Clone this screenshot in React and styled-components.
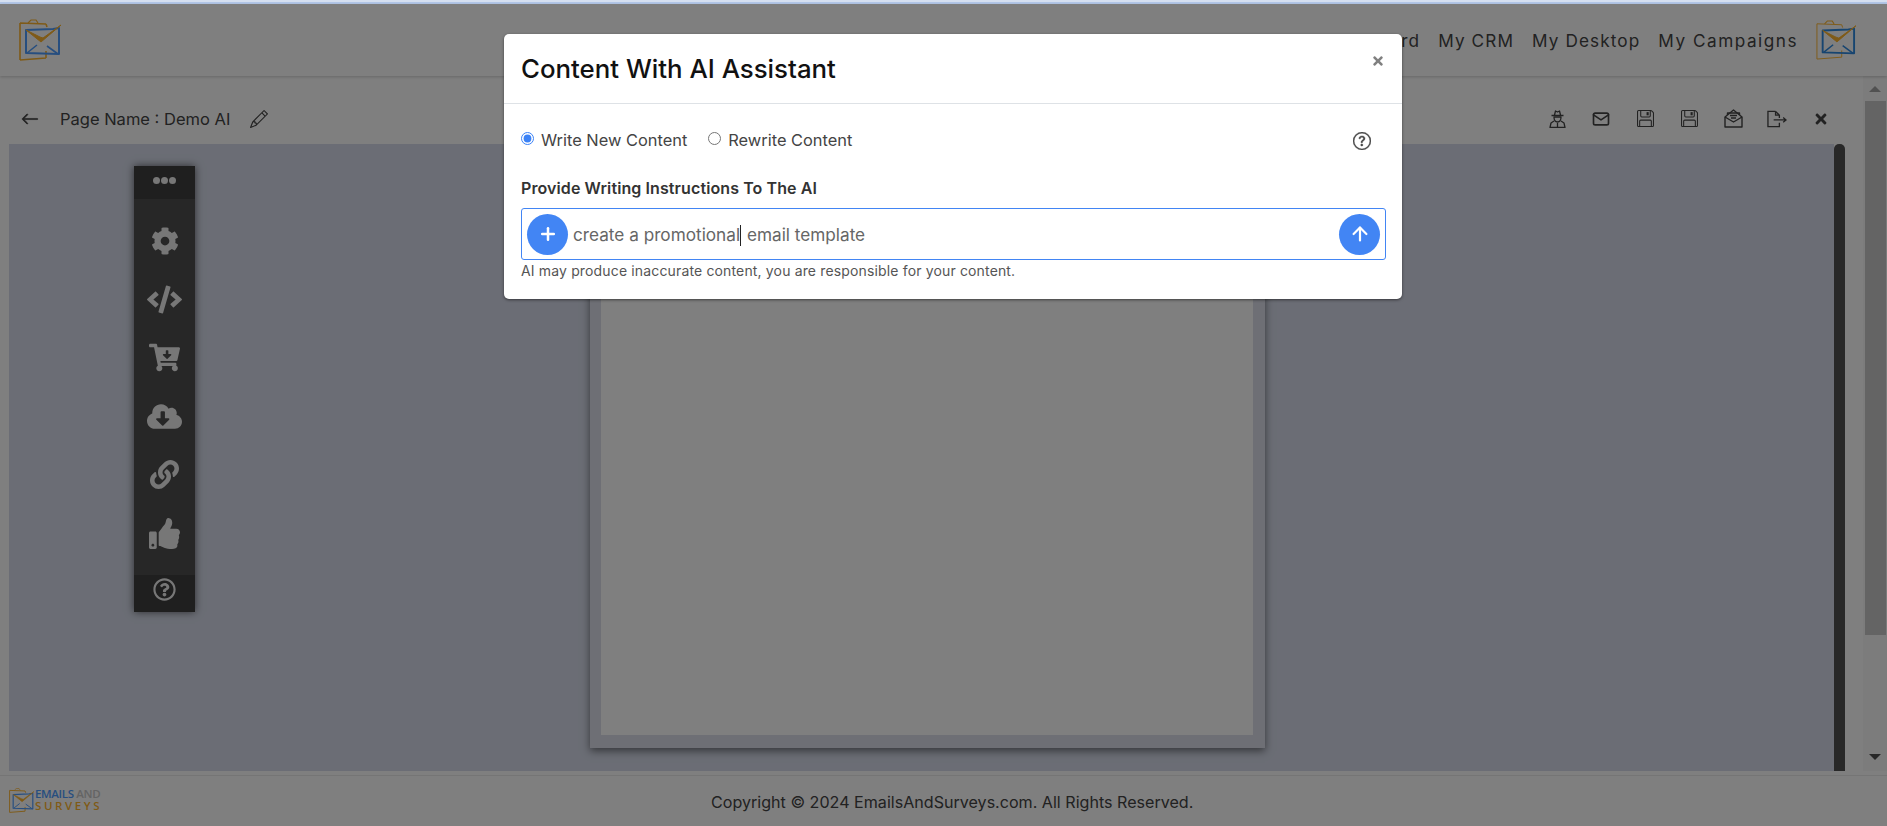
import React from 'react';
import styled, { createGlobalStyle } from 'styled-components';
import { FaCog, FaCode, FaCartArrowDown, FaCloudDownloadAlt, FaLink, FaThumbsUp, FaRegQuestionCircle, FaTimes } from 'react-icons/fa';
import { BsArrowLeft, BsPencil, BsFloppy, BsQuestionCircle } from 'react-icons/bs';
import { TbMail } from 'react-icons/tb';
import { Plus, ArrowUp } from 'lucide-react';

const FONT = `Inter, "Open Sans", "Liberation Sans", sans-serif`;

const Global = createGlobalStyle`
	html, body { margin: 0; padding: 0; height: 100%; overflow: hidden; background: #fff; }
	body { font-family: ${FONT}; color: #444; }
	* { box-sizing: border-box; }
`;

const Page = styled.div`
	position: relative;
	width: 1887px;
	height: 826px;
	display: flex;
	flex-direction: column;
	overflow: hidden;
`;

const WindowStrip = styled.div`
	height: 4px;
	flex: none;
	background: linear-gradient(#d5dff0 0, #d5dff0 2px, #b3c7e8 2px);
`;

const Header = styled.header`
	height: 72px;
	flex: none;
	display: flex;
	align-items: center;
	justify-content: space-between;
	padding: 0 31px 0 19px;
	background: #fff;
	box-shadow: 0 1px 3px rgba(0, 0, 0, .2);
	position: relative;
	z-index: 1;
`;

const Nav = styled.nav`
	display: flex;
	align-items: center;
	gap: 18px;
`;

const NavLink = styled.a`
	font-size: 17.2px;
	letter-spacing: ${p => p.$spacing || 1.1}px;
	color: #444;
	white-space: nowrap;
`;

const LogoMark = ({ size = 42, faded }) => (
	<svg width={size} height={size} viewBox="0 0 42 42" fill="none">
		<path d="M1 4 L27 5 M1 4 L1 41 M1 41 L27 39 M27 5 L28 8 M27 32 L27 39" stroke="#ffb52e" strokeWidth={faded ? 1 : 1.6} />
		<path d="M9 4 L12 1 L17 1 L19 4" stroke="#ffb52e" strokeWidth="1.2" />
		<path d="M7 11 L34 10 L40 9 L40 35 L7 34 Z" stroke={faded ? '#2f8ae0' : '#4f9dff'} strokeWidth="2" strokeLinejoin="round" />
		<path d="M8 34 L18 26 M39 35 L28 27" stroke={faded ? '#2f8ae0' : '#4f9dff'} strokeWidth="1.6" />
		<path d="M7 11 L22 23 L42 6 L24 19 L21 18 Z" fill="#ffb52e" stroke="#ffb52e" strokeWidth="1" strokeLinejoin="round" />
	</svg>
);

const Middle = styled.div`
	flex: 1;
	min-height: 0;
	display: flex;
`;

const Workspace = styled.div`
	flex: 1;
	min-width: 0;
	display: flex;
	flex-direction: column;
`;

const SubBar = styled.div`
	height: 68px;
	flex: none;
	display: flex;
	align-items: center;
	justify-content: space-between;
	padding: 17px 31px 0 21px;
`;

const PageTitle = styled.div`
	display: flex;
	align-items: center;
	font-size: 16.5px;
	color: #444;
`;

const Back = styled.span`
	display: flex;
	font-size: 18px;
	margin-right: 21px;
	color: #444;
	svg { stroke: currentColor; stroke-width: .6; }
`;

const Pencil = styled.span`
	display: flex;
	font-size: 18px;
	margin-left: 20px;
	color: #444;
`;

const Actions = styled.div`
	display: flex;
	align-items: center;
	gap: 24px;
`;

const Action = styled.span`
	display: flex;
	justify-content: center;
	width: 20px;
	font-size: ${p => p.$size || 18}px;
	color: #444;
`;

const CanvasRow = styled.div`
	flex: 1;
	min-height: 0;
	display: flex;
	padding: 0 17px 0 9px;
`;

const Canvas = styled.div`
	position: relative;
	flex: 1;
	display: flex;
	justify-content: center;
	background: #d6dbea;
	padding: 16px 0 23px 0;
`;

const Sheet = styled.div`
	width: 675px;
	margin-left: 12px;
	padding: 11px 12px 13px 11px;
	background: #dcdfea;
	box-shadow: 0 3px 8px rgba(0, 0, 0, .5);
	display: flex;
`;

const SheetInner = styled.div`
	flex: 1;
	background: #fff;
`;

const EditorScroll = styled.div`
	width: 11px;
	flex: none;
	background: #505050;
	border-radius: 5px 5px 0 0;
`;

const Tools = styled.aside`
	position: absolute;
	left: 125px;
	top: 22px;
	width: 61px;
	height: 446px;
	display: flex;
	flex-direction: column;
	background: #4e4e4e;
	box-shadow: 0 0 8px rgba(0, 0, 0, .6);
`;

const ToolsHead = styled.div`
	height: 33px;
	flex: none;
	display: flex;
	align-items: center;
	justify-content: center;
	gap: 1px;
	padding-bottom: 4px;
	background: #3e3e3e;
`;

const Dot = styled.i`
	width: 7px;
	height: 7px;
	border-radius: 50%;
	background: #eee;
`;

const ToolList = styled.div`
	flex: 1;
	display: flex;
	flex-direction: column;
	align-items: center;
	padding-top: 13px;
`;

const Tool = styled.span`
	height: 58.4px;
	display: flex;
	align-items: center;
	justify-content: center;
	font-size: ${p => p.$size || 28}px;
	color: #eee;
`;

const ToolsFoot = styled.div`
	height: 37px;
	flex: none;
	display: flex;
	align-items: center;
	justify-content: center;
	padding-bottom: 8px;
	font-size: 23px;
	color: #eee;
	background: #3e3e3e;
`;

const ScrollBar = styled.div`
	width: 25px;
	flex: none;
	display: flex;
	flex-direction: column;
	align-items: center;
	background: #f8f8f8;
	border-left: 1px solid #fff;
`;

const Arrow = styled.i`
	width: 0;
	height: 0;
	flex: none;
	border-left: 6px solid transparent;
	border-right: 6px solid transparent;
	${p => p.$down
		? 'border-top: 6px solid #505050; margin-top: auto; margin-bottom: 11px;'
		: 'border-bottom: 6px solid #a3a3a3; margin-top: 10px;'}
`;

const Thumb = styled.div`
	width: 21px;
	height: 534px;
	margin-top: 9px;
	background: #c8c8c8;
`;

const Footer = styled.footer`
	height: 51px;
	flex: none;
	margin-top: 4px;
	border-top: 1px solid #eaeaea;
	display: flex;
	align-items: center;
	position: relative;
	padding: 0 9px 2px;
	background: #fff;
`;

const FooterLogo = styled.div`
	display: flex;
	align-items: center;
	gap: 0;
`;

const BrandText = styled.div`
	display: flex;
	flex-direction: column;
	margin-left: 1px;
	font-family: "Open Sans", sans-serif;
	font-size: 11.5px;
	line-height: 12px;
	font-weight: 600;
`;

const BrandTop = styled.span`
	color: #4f9dff;
	letter-spacing: -.35px;
	span { color: #c8c8c8; }
`;

const BrandBottom = styled.span`
	color: #ffb52e;
	letter-spacing: 2.6px;
`;

const Copyright = styled.div`
	position: absolute;
	left: 711px;
	top: 16px;
	font-size: 16.1px;
	color: #444;
	white-space: nowrap;
`;

const Backdrop = styled.div`
	position: absolute;
	inset: 4px 0 0 0;
	background: rgba(0, 0, 0, .5);
	z-index: 5;
	padding: 30px 0 0 504px;
`;

const Modal = styled.div`
	width: 898px;
	height: 265px;
	background: #fff;
	border-radius: 5px;
	box-shadow: 0 1px 3px rgba(0, 0, 0, .5);
`;

const ModalHead = styled.div`
	height: 70px;
	display: flex;
	justify-content: space-between;
	padding: 17px 17px 0 17px;
	border-bottom: 1px solid #dee2e6;
`;

const ModalTitle = styled.h4`
	margin: 0;
	font-size: 25.8px;
	line-height: 36px;
	font-weight: 500;
	color: #111;
`;

const CloseBtn = styled.span`
	display: flex;
	font-size: 14px;
	color: #808080;
	margin-top: 3px;
`;

const ModalBody = styled.div`
	padding: 25px 16px 0 17px;
`;

const RadioRow = styled.div`
	display: flex;
	align-items: center;
`;

const RadioLabel = styled.label`
	display: flex;
	align-items: center;
	margin-right: 21px;
	font-size: 16.4px;
	line-height: 22px;
	color: #444;
	input {
		width: 13px;
		height: 13px;
		margin: -3px 7px 0 0;
		accent-color: #3b82f6;
	}
`;

const Help = styled.span`
	display: flex;
	margin: 2px 15px 0 auto;
	font-size: 18px;
	color: #444;
	svg { stroke: currentColor; stroke-width: .35; }
`;

const FieldLabel = styled.div`
	margin-top: 26px;
	font-size: 16px;
	letter-spacing: .1px;
	line-height: 22px;
	font-weight: 600;
	color: #333;
`;

const PromptBox = styled.div`
	height: 52px;
	margin-top: 9px;
	display: flex;
	align-items: center;
	padding: 0 5px;
	border: 1px solid #4285f4;
	border-radius: 3px;
`;

const RoundBtn = styled.span`
	width: 41px;
	height: 41px;
	flex: none;
	display: flex;
	align-items: center;
	justify-content: center;
	border-radius: 50%;
	background: #4285f4;
	color: #fff;
`;

const PromptText = styled.div`
	flex: 1;
	padding-left: 5px;
	font-size: 17.2px;
	color: #666;
	white-space: pre;
`;

const Caret = styled.span`
	display: inline-block;
	width: 1px;
	height: 21px;
	margin: 0 1px -5px 0;
	background: #222;
`;

const Disclaimer = styled.div`
	margin-top: 2px;
	font-size: 14px;
	letter-spacing: .15px;
	line-height: 18px;
	color: #555;
`;

const toolIcons = [
	[FaCog, 28],
	[FaCode, 35],
	[FaCartArrowDown, 31],
	[FaCloudDownloadAlt, 35],
	[FaLink, 29],
	[FaThumbsUp, 31],
];

export default function App() {
	return (
		<Page>
			<Global />
			<WindowStrip />
			<Header>
				<LogoMark />
				<Nav>
					<NavLink>Dashboard</NavLink>
					<NavLink>My CRM</NavLink>
					<NavLink>My Desktop</NavLink>
					<NavLink $spacing={1.5}>My Campaigns</NavLink>
					<LogoMark size={40} faded />
				</Nav>
			</Header>
			<Middle>
				<Workspace>
					<SubBar>
						<PageTitle>
							<Back><BsArrowLeft /></Back>
							Page Name : Demo AI
							<Pencil><BsPencil /></Pencil>
						</PageTitle>
						<Actions>
							<Action>
								<svg width="17" height="18" viewBox="0 0 17 18" fill="none" stroke="currentColor" strokeWidth="1.3" strokeLinejoin="round">
									<path d="M5.5 5 L6.5 1 L8.5 2 L10.5 1 L11.5 5 M2.5 5.5 H14.5" />
									<path d="M4.5 7 H12.5 M5 7 C5 11 7 12 8.5 12 C10 12 12 11 12 7" />
									<path d="M5 11 L2 13 L1 17.5 H16 L15 13 L12 11 M8.5 13 V17" />
								</svg>
							</Action>
							<Action $size={24}><TbMail /></Action>
							<Action $size={17}><BsFloppy /></Action>
							<Action $size={17}><BsFloppy /></Action>
							<Action>
								<svg width="19" height="19" viewBox="0 0 19 19" fill="none" stroke="currentColor" strokeWidth="1.4" strokeLinejoin="round">
									<path d="M1 8 L9.5 1 L18 8 V18 H1 Z" />
									<path d="M1 8 L9.5 13 L18 8 M3.5 6 V4 H15.5 V6 M6 6.5 H13 M7 9 H12" />
								</svg>
							</Action>
							<Action>
								<svg width="21" height="18" viewBox="0 0 21 18" fill="none" stroke="currentColor" strokeWidth="1.4">
									<path d="M9 1 H1 V17 H13 V13 M9 1 L13 5 V8 M9 1 V5 H13" />
									<path d="M7 10 H20 M17 7.5 L20 10 L17 12.5" />
								</svg>
							</Action>
							<Action $size={16}><FaTimes /></Action>
						</Actions>
					</SubBar>
					<CanvasRow>
						<Canvas>
							<Tools>
								<ToolsHead><Dot /><Dot /><Dot /></ToolsHead>
								<ToolList>
									{toolIcons.map(([Icon, size], i) => (
										<Tool key={i} $size={size}><Icon /></Tool>
									))}
								</ToolList>
								<ToolsFoot><FaRegQuestionCircle /></ToolsFoot>
							</Tools>
							<Sheet><SheetInner /></Sheet>
						</Canvas>
						<EditorScroll />
					</CanvasRow>
				</Workspace>
				<ScrollBar>
					<Arrow />
					<Thumb />
					<Arrow $down />
				</ScrollBar>
			</Middle>
			<Footer>
				<FooterLogo>
					<LogoMark size={25} />
					<BrandText>
						<BrandTop>EMAILS <span>AND</span></BrandTop>
						<BrandBottom>SURVEYS</BrandBottom>
					</BrandText>
				</FooterLogo>
				<Copyright>Copyright © 2024 EmailsAndSurveys.com. All Rights Reserved.</Copyright>
			</Footer>
			<Backdrop>
				<Modal>
					<ModalHead>
						<ModalTitle>Content With AI Assistant</ModalTitle>
						<CloseBtn><FaTimes /></CloseBtn>
					</ModalHead>
					<ModalBody>
						<RadioRow>
							<RadioLabel><input type="radio" name="mode" defaultChecked />Write New Content</RadioLabel>
							<RadioLabel><input type="radio" name="mode" />Rewrite Content</RadioLabel>
							<Help><BsQuestionCircle /></Help>
						</RadioRow>
						<FieldLabel>Provide Writing Instructions To The AI</FieldLabel>
						<PromptBox>
							<RoundBtn><Plus size={20} strokeWidth={3} /></RoundBtn>
							<PromptText>create a promotional<Caret /> email template</PromptText>
							<RoundBtn><ArrowUp size={22} strokeWidth={2.4} /></RoundBtn>
						</PromptBox>
						<Disclaimer>AI may produce inaccurate content, you are responsible for your content.</Disclaimer>
					</ModalBody>
				</Modal>
			</Backdrop>
		</Page>
	);
}
